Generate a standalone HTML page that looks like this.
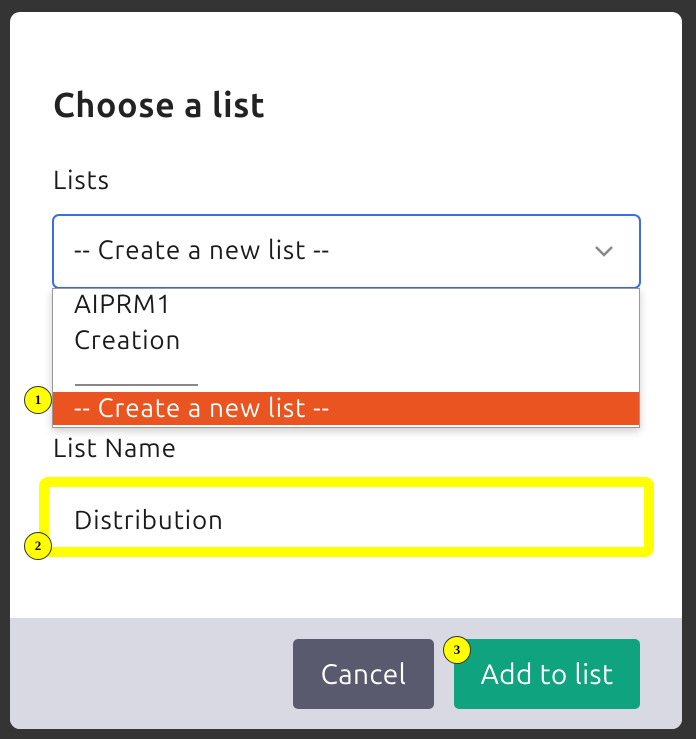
<!DOCTYPE html>
<html><head><style>
*{margin:0;padding:0;box-sizing:border-box}
body{width:696px;height:739px;background:#343434;position:relative;overflow:hidden;font-family:"Ubuntu","Liberation Sans",sans-serif;color:#1a1a1a}
.dlg{position:absolute;left:10px;top:12px;width:672px;height:717px;background:#fff;border-radius:10px;overflow:hidden}
.foot{position:absolute;left:0;top:606px;width:672px;height:111px;background:#d9d9e3}
.abs{position:absolute}
.t{font-size:26px;letter-spacing:0.9px;white-space:nowrap}
.mk{position:absolute;width:28px;height:28px;border-radius:50%;background:#ffff00;border:1.5px solid #333;font:bold 13px "Liberation Serif",serif;text-align:center;line-height:25px;color:#000}
</style></head><body>
<div class="dlg">
 <div class="abs" style="left:43px;top:74px;font-size:34px;letter-spacing:0.7px;font-weight:bold;color:#222">Choose a list</div>
 <div class="abs t" style="left:43px;top:153px">Lists</div>
 <div class="abs" style="left:42px;top:202px;width:589px;height:75px;border:2px solid #3b6fe0;border-radius:7px"></div>
 <div class="abs t" style="left:64px;top:223px">-- Create a new list --</div>
 <svg class="abs" style="left:583px;top:232px" width="22" height="14"><path d="M3 3l8 8 8-8" stroke="#888" stroke-width="2.5" fill="none"/></svg>
 <div class="abs" style="left:42px;top:276px;width:588px;height:140px;background:#fff;border:1px solid #999;box-shadow:0 3px 8px rgba(0,0,0,.2)"></div>
 <div class="abs t" style="left:64px;top:277px">AIPRM1</div>
 <div class="abs t" style="left:64px;top:313px">Creation</div>
 <div class="abs" style="left:65px;top:372px;width:123px;height:2px;background:#888"></div>
 <div class="abs" style="left:43px;top:380px;width:586px;height:33px;background:#e95420"></div>
 <div class="abs t" style="left:64px;top:381px;color:#fff">-- Create a new list --</div>
 <div class="abs t" style="left:43px;top:421px">List Name</div>
 <div class="abs" style="left:29px;top:465px;width:615px;height:80px;border:10px solid #ffff00;border-radius:9px"></div>
 <div class="abs t" style="left:64px;top:493px">Distribution</div>
 <div class="foot">
  <div class="abs" style="left:283px;top:21px;width:141px;height:70px;background:#5a5a6e;border-radius:5px;color:#fff;font-size:28px;letter-spacing:0.4px;text-align:center;line-height:71px">Cancel</div>
  <div class="abs" style="left:444px;top:21px;width:186px;height:70px;background:#10a37f;border-radius:5px;color:#fff;font-size:28px;letter-spacing:0.4px;text-align:center;line-height:71px">Add to list</div>
 </div>
</div>
<div class="mk" style="left:24px;top:386px">1</div>
<div class="mk" style="left:24px;top:532px">2</div>
<div class="mk" style="left:443px;top:636px">3</div>
</body></html>
